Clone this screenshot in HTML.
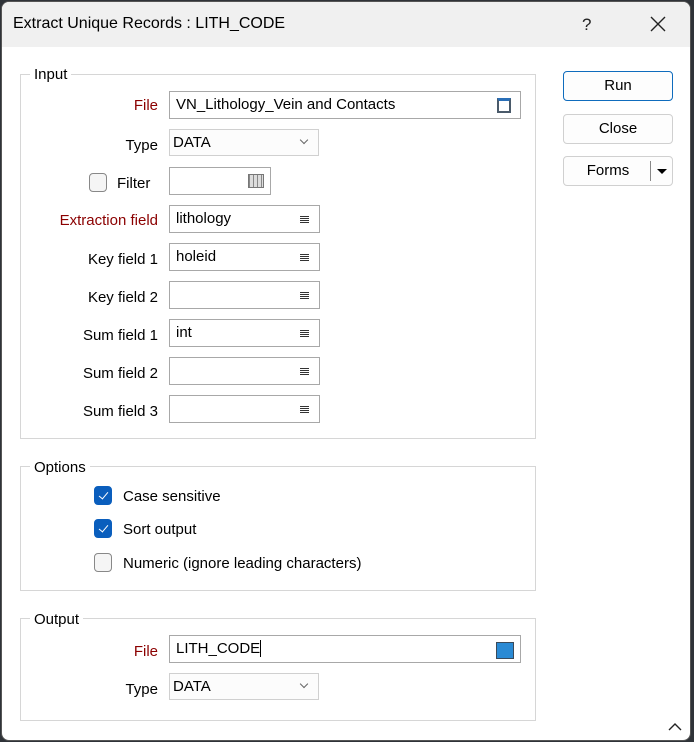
<!DOCTYPE html>
<html><head><style>
*{box-sizing:border-box;margin:0;padding:0}
body{width:694px;height:742px;background:#2f3338;font-family:"Liberation Sans",sans-serif;font-size:15px;color:#000;position:relative;overflow:hidden}
.win{position:absolute;left:1px;top:1px;width:690px;height:740px;background:#fff;border-radius:8px;overflow:hidden;border:1px solid #555}
.tb{position:absolute;left:0;top:0;width:100%;height:45px;background:#f0f0f0}
.a{position:absolute}
.grp{position:absolute;border:1px solid #d6d6d6}
.gl{position:absolute;background:#fff;padding:0 4px;font-size:15px}
.lbl{position:absolute;text-align:right;width:160px;left:0}
.red{color:#8b0000}
.box{position:absolute;border:1px solid #a8a8a8;background:#fff;height:28px;padding:4px 6px;white-space:nowrap}
.sel{position:absolute;border:1px solid #d0d0d0;background:#fcfcfc;height:27px;padding:4px 3px}
.chev{position:absolute;right:11px;top:7px;width:6px;height:6px;border-right:1px solid #666;border-bottom:1px solid #666;transform:rotate(45deg)}
.lst{position:absolute;right:10px;top:10px;width:9px;height:8px;background:repeating-linear-gradient(#333 0 1px,transparent 1px 2px)}
.cb{position:absolute;width:18px;height:19px;border:1px solid #888;border-radius:4px;background:#f5f5f5}
.cb.on{background:#0a5ebd;border-color:#0a5ebd}
.cb.on::after{content:"";position:absolute;left:6px;top:3px;width:4px;height:8px;border-right:1.3px solid #fff;border-bottom:1.3px solid #fff;transform:rotate(40deg)}
.btn{position:absolute;left:561px;width:110px;border:1px solid #d0d0d0;border-radius:4px;background:#fdfdfd;text-align:center;height:30px;line-height:28px}
</style></head><body>
<div class="win">
<div class="tb"></div>
<div class="a" style="left:11px;top:13px;font-size:16px">Extract Unique Records : LITH_CODE</div>
<div class="a" style="left:580px;top:13px;font-size:17px;color:#222">?</div>
<div class="a" style="left:647px;top:13px;width:18px;height:18px">
<svg width="18" height="18"><path d="M2 2L16 16M16 2L2 16" stroke="#222" stroke-width="1.4"/></svg></div>

<div class="grp" style="left:18px;top:72px;width:516px;height:365px"></div>
<div class="gl" style="left:28px;top:64px">Input</div>
<div class="lbl red" style="top:95px;width:156px">File</div>
<div class="box" style="left:167px;top:89px;width:352px">VN_Lithology_Vein and Contacts
<div class="a" style="right:9px;top:6px;width:14px;height:15px;border:2px solid #4a5a6a;border-top:3px solid #2a6fb8;background:#fff"></div></div>
<div class="lbl" style="top:135px;width:156px">Type</div>
<div class="sel" style="left:167px;top:127px;width:150px">DATA<div class="chev"></div></div>
<div class="cb" style="left:87px;top:171px"></div>
<div class="a" style="left:115px;top:173px">Filter</div>
<div class="box" style="left:167px;top:165px;width:102px"><div class="a" style="right:6px;top:6px;width:16px;height:14px;border:1px solid #777;background:repeating-linear-gradient(90deg,#888 0 1px,#ddd 1px 4px)"></div></div>
<div class="lbl red" style="top:210px;width:156px">Extraction field</div>
<div class="box" style="left:167px;top:203px;width:151px">lithology<div class="lst"></div></div>
<div class="lbl" style="top:249px;width:156px">Key field 1</div>
<div class="box" style="left:167px;top:241px;width:151px">holeid<div class="lst"></div></div>
<div class="lbl" style="top:287px;width:156px">Key field 2</div>
<div class="box" style="left:167px;top:279px;width:151px"><div class="lst"></div></div>
<div class="lbl" style="top:325px;width:156px">Sum field 1</div>
<div class="box" style="left:167px;top:317px;width:151px">int<div class="lst"></div></div>
<div class="lbl" style="top:363px;width:156px">Sum field 2</div>
<div class="box" style="left:167px;top:355px;width:151px"><div class="lst"></div></div>
<div class="lbl" style="top:401px;width:156px">Sum field 3</div>
<div class="box" style="left:167px;top:393px;width:151px"><div class="lst"></div></div>

<div class="grp" style="left:18px;top:464px;width:516px;height:125px"></div>
<div class="gl" style="left:28px;top:457px">Options</div>
<div class="cb on" style="left:92px;top:484px"></div>
<div class="a" style="left:121px;top:486px">Case sensitive</div>
<div class="cb on" style="left:92px;top:517px"></div>
<div class="a" style="left:121px;top:519px">Sort output</div>
<div class="cb" style="left:92px;top:551px"></div>
<div class="a" style="left:121px;top:553px">Numeric (ignore leading characters)</div>

<div class="grp" style="left:18px;top:616px;width:516px;height:103px"></div>
<div class="gl" style="left:28px;top:609px">Output</div>
<div class="lbl red" style="top:641px;width:156px">File</div>
<div class="box" style="left:167px;top:633px;width:352px">LITH_CODE<span style="border-left:1px solid #000"></span>
<div class="a" style="right:6px;top:6px;width:18px;height:17px;border:1px solid #3a4a5a;background:#2a8ad4"></div></div>
<div class="lbl" style="top:679px;width:156px">Type</div>
<div class="sel" style="left:167px;top:671px;width:150px">DATA<div class="chev"></div></div>

<div class="btn" style="top:69px;border-color:#0f6cbd">Run</div>
<div class="btn" style="top:112px">Close</div>
<div class="btn" style="top:154px;padding-right:20px">Forms
<div class="a" style="left:86px;top:4px;width:1px;height:20px;background:#888"></div>
<div class="a" style="left:93px;top:12px;border-left:5px solid transparent;border-right:5px solid transparent;border-top:5px solid #000"></div></div>

<svg class="a" style="left:665px;top:718px" width="16" height="12"><path d="M2 10L8 4L14 10" stroke="#222" stroke-width="1.4" fill="none"/></svg>
</div>
</body></html>
